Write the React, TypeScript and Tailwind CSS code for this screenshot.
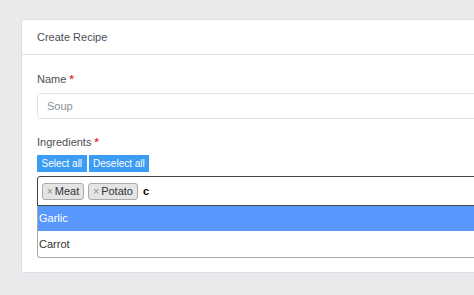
import { useState } from 'react'

export default function App() {
  const [tags] = useState(['Meat', 'Potato'])

  return (
    <div className="w-[474px] h-[295px] overflow-hidden bg-[#e9eaec] pt-[19px] pl-[21px] font-['Liberation_Sans',Arial,sans-serif]">
      <div className="w-[480px] h-[254px] bg-white border border-[#dcdee2] rounded-[3px]">
        {/* Header */}
        <div className="h-[35px] flex items-center px-[15px] border-b border-[#e3e4e6] text-[11px] text-[#4a4f55]">
          Create Recipe
        </div>

        {/* Body */}
        <div className="px-[15px] pt-[16px]">
          <label className="block text-[11px] leading-[16px] text-[#4a4f55] mb-[6px]">
            Name <span className="text-[#e3342f] font-bold">*</span>
          </label>
          <div className="h-[26px] flex items-center border border-[#dfe2e6] rounded-[3px] px-[9px] text-[11px] text-[#8a9096]">
            Soup
          </div>

          <label className="block text-[11px] leading-[16px] text-[#4a4f55] mt-[15px] mb-[5px]">
            Ingredients <span className="text-[#e3342f] font-bold">*</span>
          </label>
          <div className="flex gap-[2px] mb-[4px]">
            <button className="h-[17px] px-[4.5px] bg-[#3b9cf5] text-white text-[10px] leading-[17px]">Select all</button>
            <button className="h-[17px] px-[4.5px] bg-[#3b9cf5] text-white text-[10px] leading-[17px]">Deselect all</button>
          </div>

          {/* Select box */}
          <div className="h-[30px] flex items-center gap-[4px] border border-[#444] rounded-t-[3px] px-[4px]">
            {tags.map((t) => (
              <span
                key={t}
                className="h-[17px] flex items-center gap-[2px] px-[4px] bg-[#e4e4e4] border border-[#aaa] rounded-[3px] text-[11px] text-[#333]"
              >
                <span className="text-[#888] text-[10px]">×</span>
                {t}
              </span>
            ))}
            <span className="text-[11px] font-bold text-black ml-[1px]">c</span>
          </div>

          {/* Dropdown */}
          <div className="border border-t-0 border-[#aaa] rounded-b-[3px]">
            <div className="h-[25px] flex items-center px-[1px] bg-[#5897fb] text-white text-[11px]">Garlic</div>
            <div className="h-[26px] flex items-center px-[1px] text-[#333] text-[11px]">Carrot</div>
          </div>
        </div>
      </div>
    </div>
  )
}
